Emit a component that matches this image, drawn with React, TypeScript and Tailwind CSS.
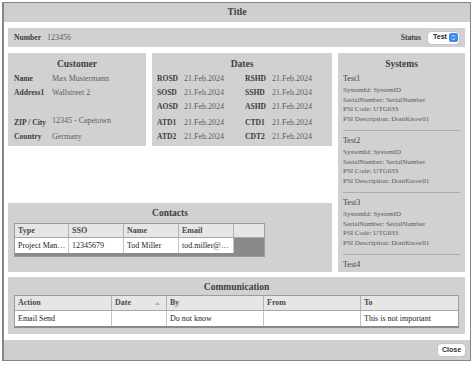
import { ReactNode } from "react"

const serif = { fontFamily: '"Liberation Serif", "Times New Roman", serif' }
const sans = { fontFamily: '"Liberation Sans", Arial, sans-serif' }

function Panel({ title, className, children }: { title: string; className?: string; children?: ReactNode }) {
  return (
    <div className={"bg-[#d1d1d1] flex flex-col " + (className ?? "")}>
      <div className="h-[15px] shrink-0 flex items-center justify-center text-[9.5px] font-bold text-[#404040]">{title}</div>
      {children}
    </div>
  )
}

function Field({ label, value, labelClass = "" }: { label: string; value: string; labelClass?: string }) {
  return (
    <>
      <div className={"h-[14px] flex items-center text-[7.6px] font-bold text-[#3d3d3d] whitespace-nowrap " + labelClass}>{label}</div>
      <div className="h-[14px] flex items-center text-[8px] text-[#5e5e5e] whitespace-nowrap">{value}</div>
    </>
  )
}

const systems = ["Test1", "Test2", "Test3"]

function SystemItem({ name }: { name: string }) {
  return (
    <div>
      <div className="h-[12px] leading-[12px] text-[8px] text-[#444]">{name}</div>
      <div className="pt-[1px] text-[7px] leading-[9.5px] text-[#595959]">
        <div>SystemId: SystemID</div>
        <div>SerialNumber: SerialNumber</div>
        <div>PSI Code: UTG033</div>
        <div>PSI Description: DontKnow01</div>
      </div>
      <div className="mt-[6px] mb-[4px] border-t border-[#ababab]" />
    </div>
  )
}

const contactCols = "grid grid-cols-[54px_55px_55px_55px_1fr]"
const commCols = "grid grid-cols-[97px_55px_97px_97px_1fr]"

export default function App() {
  return (
    <div className="w-[474px] h-[366px] bg-white overflow-hidden" style={serif}>
      <div className="ml-[2px] mt-[2px] w-[469px] h-[359px] border border-[#858585] border-l-2 flex flex-col bg-white">
        <div className="h-[19px] shrink-0 bg-[#cfcfcf] flex items-center justify-center text-[9.5px] font-bold text-[#404040]">
          Title
        </div>

        <div className="flex-1 pl-[4px] pr-[5px] pt-[6px] flex flex-col">
          {/* number bar */}
          <div className="h-[19px] bg-[#d1d1d1] flex items-center px-[6px]">
            <span className="text-[7.6px] font-bold text-[#3d3d3d]">Number</span>
            <span className="ml-[6px] text-[8px] text-[#5e5e5e]">123456</span>
            <span className="ml-auto text-[7.6px] font-bold text-[#3d3d3d]">Status</span>
            <div className="ml-[7px] w-[31px] h-[12px] bg-white rounded-[3px] shadow-[0_0_1px_rgba(0,0,0,0.4)] flex items-center pl-[5px] pr-[1px]" style={sans}>
              <span className="text-[7px] font-semibold text-[#222]">Test</span>
              <span className="ml-auto w-[9px] h-[9px] rounded-[2px] bg-[#3f86f2] flex items-center justify-center">
                <svg width="5" height="7" viewBox="0 0 5 7">
                  <path d="M1 2.6 L2.5 1.1 L4 2.6 M1 4.4 L2.5 5.9 L4 4.4" stroke="white" strokeWidth="0.9" fill="none" />
                </svg>
              </span>
            </div>
          </div>

          {/* middle */}
          <div className="mt-[6px] h-[219px] flex gap-[6px]">
            <div className="w-[324px] flex flex-col justify-between">
              <div className="flex gap-[6px]">
                <Panel title="Customer" className="w-[138px] h-[93px] pt-[4px]">
                  <div className="px-[6px] grid grid-cols-[38px_1fr]">
                    <Field label="Name" value="Max Mustermann" />
                    <Field label="Address1" value="Wallstreet 2" />
                    <div className="h-[14px]" />
                    <div className="h-[14px]" />
                    <Field label="ZIP / City" value="12345 - Capetown" labelClass="mt-[2px]" />
                    <Field label="Country" value="Germany" />
                  </div>
                </Panel>
                <Panel title="Dates" className="w-[180px] h-[93px] pt-[4px]">
                  <div className="px-[5px] grid grid-cols-[27px_61px_27px_1fr]">
                    <Field label="ROSD" value="21.Feb.2024" />
                    <Field label="RSHD" value="21.Feb.2024" />
                    <Field label="SOSD" value="21.Feb.2024" />
                    <Field label="SSHD" value="21.Feb.2024" />
                    <Field label="AOSD" value="21.Feb.2024" />
                    <Field label="ASHD" value="21.Feb.2024" />
                    <div className="h-[2px] col-span-4" />
                    <Field label="ATD1" value="21.Feb.2024" />
                    <Field label="CTD1" value="21.Feb.2024" />
                    <Field label="ATD2" value="21.Feb.2024" />
                    <Field label="CDT2" value="21.Feb.2024" />
                  </div>
                </Panel>
              </div>

              <Panel title="Contacts" className="h-[69px] pt-[3px]">
                <div className="mt-[2px] mx-[6px] w-[251px] border border-[#9d9d9d] text-[8px]">
                  <div className={contactCols + " h-[14px] bg-[#e6e6e6] border-b border-[#a8a8a8] font-bold text-[#4a4a4a]"}>
                    {["Type", "SSO", "Name", "Email", ""].map((h, i) => (
                      <div key={i} className={"pl-[3px] flex items-center " + (i < 4 ? "border-r border-[#b3b3b3]" : "")}>{h}</div>
                    ))}
                  </div>
                  <div className="bg-[#8a8a8a] pb-[3px]">
                    <div className={contactCols + " h-[15px] text-[#222]"}>
                      {["Project Man…", "12345679", "Tod Miller", "tod.miller@…"].map((c, i) => (
                        <div key={i} className="pl-[3px] flex items-center bg-white border-r border-[#c4c4c4] whitespace-nowrap overflow-hidden">{c}</div>
                      ))}
                      <div />
                    </div>
                  </div>
                </div>
              </Panel>
            </div>

            <Panel title="Systems" className="w-[127px] h-[219px] pt-[4px] overflow-hidden">
              <div className="mt-[1px] px-[5px]">
                {systems.map((s) => (
                  <SystemItem key={s} name={s} />
                ))}
                <div className="h-[12px] leading-[12px] text-[8px] text-[#444]">Test4</div>
              </div>
            </Panel>
          </div>

          {/* communication */}
          <Panel title="Communication" className="mt-[5px] h-[57px] pt-[3px]">
            <div className="mx-[6px] border border-[#9d9d9d] border-b-2 border-b-[#8a8a8a] text-[8px]">
              <div className={commCols + " h-[15px] bg-[#e6e6e6] border-b border-[#a8a8a8] font-bold text-[#4a4a4a]"}>
                {["Action", "Date", "By", "From", "To"].map((h, i) => (
                  <div key={h} className={"pl-[3px] pr-[6px] flex items-center " + (i < 4 ? "border-r border-[#b3b3b3]" : "")}>
                    {h}
                    {h === "Date" && (
                      <svg className="ml-auto" width="5" height="3" viewBox="0 0 5 3">
                        <path d="M0 3 L2.5 0 L5 3 Z" fill="#b0b0b0" />
                      </svg>
                    )}
                  </div>
                ))}
              </div>
              <div className={commCols + " h-[15px] bg-white text-[#222]"}>
                {["Email Send", "", "Do not know", "", "This is not important"].map((c, i) => (
                  <div key={i} className={"pl-[3px] flex items-center " + (i < 4 ? "border-r border-[#c4c4c4]" : "")}>{c}</div>
                ))}
              </div>
            </div>
          </Panel>
        </div>

        <div className="h-[20px] shrink-0 bg-[#cfcfcf] flex items-center justify-end pr-[5px]">
          <button className="w-[27px] h-[12px] bg-white rounded-[3px] shadow-[0_0_1px_rgba(0,0,0,0.35)] text-[7px] font-semibold text-[#333] flex items-center justify-center" style={sans}>
            Close
          </button>
        </div>
      </div>
    </div>
  )
}
